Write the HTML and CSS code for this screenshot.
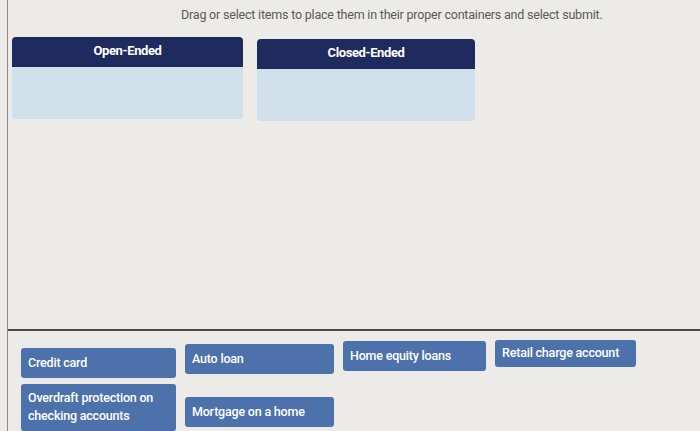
FILE: index.html
```html
<!DOCTYPE html>
<html>
<head>
<meta charset="utf-8">
<link rel="stylesheet" href="styles.css">
</head>
<body>
<div class="page">
  <p class="instructions">Drag or select items to place them in their proper containers and select submit.</p>
  <div class="containers">
    <div class="bin bin-open">
      <div class="bin-head">Open-Ended</div>
      <div class="bin-body"></div>
    </div>
    <div class="bin bin-closed">
      <div class="bin-head">Closed-Ended</div>
      <div class="bin-body"></div>
    </div>
  </div>
  <div class="divider"></div>
  <div class="items">
    <div class="item c1 r1">Credit card</div>
    <div class="item c2 r1">Auto loan</div>
    <div class="item c3 r1">Home equity loans</div>
    <div class="item c4 r1">Retail charge account</div>
    <div class="item c1 tall">Overdraft protection on checking accounts</div>
    <div class="item c2">Mortgage on a home</div>
  </div>
</div>
</body>
</html>
```
FILE: styles.css
```css
html, body {
  margin: 0;
  padding: 0;
}
body {
  background: #ecebe7;
  font-family: Roboto, "Liberation Sans", sans-serif;
  width: 700px;
  height: 431px;
  overflow: hidden;
}
.page {
  position: relative;
  height: 431px;
  margin-left: 7px;
  border-left: 1px solid #8a8a88;
  box-sizing: border-box;
  padding-top: 6px;
}
.instructions {
  margin: 0 0 0 173px;
  font-size: 12.5px;
  color: #5a5a5a;
  line-height: 18px;
  letter-spacing: -0.2px;
}
.containers {
  display: flex;
  gap: 14px;
  margin: 13px 0 0 4px;
  align-items: flex-start;
}
.bin {
  border-radius: 4px;
  overflow: hidden;
  background: #cfe0ea;
}
.bin-open {
  width: 231px;
}
.bin-closed {
  width: 218px;
  margin-top: 2px;
}
.bin-head {
  background: #1f2a5e;
  color: #ffffff;
  font-size: 13px;
  font-weight: 700;
  letter-spacing: -0.4px;
  text-align: center;
  height: 30px;
  line-height: 27px;
}
.bin-body {
  height: 52px;
}
.divider {
  margin-top: 208px;
  height: 2px;
  background: #4a4a4a;
  width: 100%;
}
.items {
  display: grid;
  grid-template-columns: 155px 149px 143px 141px;
  column-gap: 9px;
  row-gap: 6px;
  margin: 9px 0 0 13px;
  align-items: end;
}
.item {
  background: #4d72ab;
  color: #ffffff;
  font-size: 12.5px;
  font-weight: 500;
  letter-spacing: -0.2px;
  border-radius: 3px;
  padding: 6px 7px;
  line-height: 18px;
  min-height: 30px;
  box-sizing: border-box;
  display: flex;
  align-items: center;
}
.r1.c2 { margin-bottom: 4px; }
.r1.c3 { margin-bottom: 7px; }
.r1.c4 { margin-bottom: 11px; align-items: flex-start; padding-top: 4px; height: 27px; min-height: 27px; }
.item.c2:not(.r1) { margin-bottom: 4px; }
.tall {
  min-height: 47px;
  padding-top: 4px;
  padding-bottom: 5px;
}
```
